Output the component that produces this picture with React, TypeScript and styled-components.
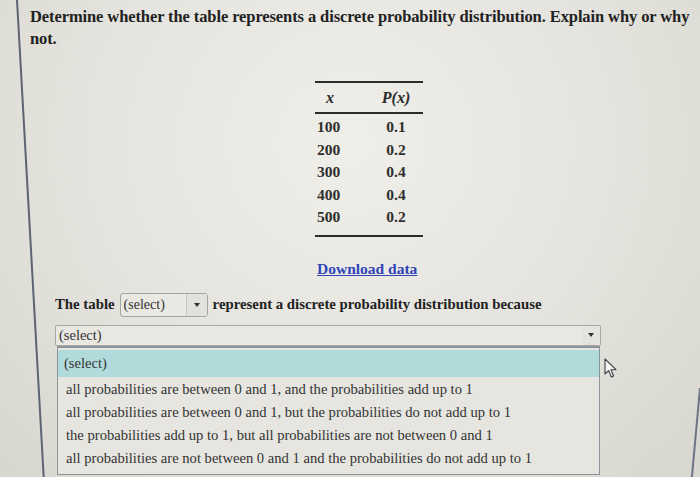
import styled, { createGlobalStyle } from "styled-components";

const GlobalStyle = createGlobalStyle`
  html, body {
    margin: 0;
    padding: 0;
  }
  body {
    font-family: "Liberation Serif", "Times New Roman", serif;
    color: #1f1f1f;
  }
`;

const ROWS = [
  ["100", "0.1"],
  ["200", "0.2"],
  ["300", "0.4"],
  ["400", "0.4"],
  ["500", "0.2"],
];

const OPTIONS = [
  "all probabilities are between 0 and 1, and the probabilities add up to 1",
  "all probabilities are between 0 and 1, but the probabilities do not add up to 1",
  "the probabilities add up to 1, but all probabilities are not between 0 and 1",
  "all probabilities are not between 0 and 1 and the probabilities do not add up to 1",
];

function Cursor() {
  return (
    <CursorMark width="14" height="21" viewBox="0 0 14 21">
      <path
        d="M1 1 L1 16 L4.6 12.6 L7.4 19 L9.6 18 L6.9 11.8 L12 11.6 Z"
        fill="#f4f4f0"
        stroke="#3a3f4a"
        strokeWidth="1.1"
        strokeLinejoin="round"
      />
    </CursorMark>
  );
}

function App() {
  return (
    <Page>
      <GlobalStyle />
      <Title>
        Determine whether the table represents a discrete probability
        distribution. Explain why or why not.
      </Title>

      <TableBlock>
        <DataTable>
          <Head>x</Head>
          <Head $right>P(x)</Head>
          {ROWS.map(([x, p], i) => (
            <Row key={x} $first={i === 0} $last={i === ROWS.length - 1}>
              <Cell>{x}</Cell>
              <Cell $right>{p}</Cell>
            </Row>
          ))}
        </DataTable>
        <DownloadLink href="#">Download data</DownloadLink>
      </TableBlock>

      <Sentence>
        The table
        <InlineSelect>
          <span>(select)</span>
          <ArrowBox>
            <Triangle />
          </ArrowBox>
        </InlineSelect>
        represent a discrete probability distribution because
      </Sentence>

      <Dropdown>
        <WideSelect>
          <span>(select)</span>
          <WideArrow>
            <Triangle />
          </WideArrow>
        </WideSelect>
        <OptionList>
          <Option $active>(select)</Option>
          {OPTIONS.map((o) => (
            <Option key={o}>{o}</Option>
          ))}
        </OptionList>
        <Cursor />
      </Dropdown>
    </Page>
  );
}

const Page = styled.div`
  position: relative;
  width: 700px;
  height: 477px;
  overflow: hidden;
  box-sizing: border-box;
  padding: 6px 0 0 30px;
  background:
    radial-gradient(ellipse at 50% 30%, #efeee9 0%, #e5e4de 50%, #d7d6cf 100%);

  &::before {
    content: "";
    position: absolute;
    left: 16px;
    top: 0;
    width: 1.5px;
    height: 480px;
    background: #5d6371;
    transform-origin: top left;
    transform: rotate(-3.2deg);
  }

  &::after {
    content: "";
    position: absolute;
    left: 699px;
    top: 388px;
    width: 1.5px;
    height: 92px;
    background: #6d7585;
    transform-origin: top left;
    transform: rotate(5.2deg);
  }
`;

const Title = styled.div`
  width: 668px;
  font-weight: bold;
  font-size: 16.5px;
  line-height: 22px;
  color: #222;
  letter-spacing: -0.1px;
`;

const TableBlock = styled.div`
  margin: 31px 0 0 285px;
  width: 108px;
  display: flex;
  flex-direction: column;
`;

const DataTable = styled.div`
  display: grid;
  grid-template-columns: 30px 78px;
  border-top: 2px solid #2b2b2b;
  border-bottom: 2px solid #2b2b2b;
`;

const Head = styled.div<{ $right?: boolean }>`
  font-size: 16px;
  font-style: italic;
  font-weight: bold;
  height: 29px;
  line-height: 29px;
  text-align: center;
  padding-left: ${(p) => (p.$right ? "24px" : "0")};
  border-bottom: 2px solid #2b2b2b;
  color: #2a2a2a;
`;

const Row = styled.div<{ $first?: boolean; $last?: boolean }>`
  display: contents;
  & > div {
    padding-top: ${(p) => (p.$first ? "2px" : "0")};
    padding-bottom: ${(p) => (p.$last ? "6px" : "0")};
  }
`;

const Cell = styled.div<{ $right?: boolean }>`
  font-size: 15.5px;
  font-weight: bold;
  line-height: 22.5px;
  text-align: ${(p) => (p.$right ? "center" : "left")};
  padding-left: ${(p) => (p.$right ? "24px" : "2px")};
  color: #2f2f2f;
`;

const DownloadLink = styled.a`
  margin-top: 22px;
  align-self: flex-start;
  margin-left: 2px;
  font-weight: bold;
  font-size: 15.5px;
  line-height: 20px;
  color: #2f45b8;
  text-decoration: underline;
  white-space: nowrap;
`;

const Sentence = styled.div`
  margin: 14px 0 0 25px;
  display: flex;
  align-items: center;
  gap: 5px;
  font-weight: bold;
  font-size: 14.8px;
  color: #222;
  white-space: nowrap;
`;

const InlineSelect = styled.div`
  display: flex;
  align-items: stretch;
  width: 88px;
  height: 24px;
  box-sizing: border-box;
  border: 1px solid #a5a5a0;
  border-radius: 3px;
  background: #e9e8e3;
  font-weight: normal;
  font-size: 14px;

  & > span {
    flex: 1;
    display: flex;
    align-items: center;
    padding-left: 3px;
    color: #333;
  }
`;

const ArrowBox = styled.div`
  width: 20px;
  display: flex;
  align-items: center;
  justify-content: center;
  border-left: 1px solid #c8c8c2;
  background: #e2e1dc;
`;

const Triangle = styled.div`
  width: 0;
  height: 0;
  border-left: 3px solid transparent;
  border-right: 3px solid transparent;
  border-top: 4px solid #333;
`;

const Dropdown = styled.div`
  position: relative;
  margin: 8px 0 0 25px;
  width: 546px;
`;

const WideSelect = styled.div`
  display: flex;
  height: 21px;
  box-sizing: border-box;
  border: 1px solid #a9a9a4;
  border-radius: 2px;
  background: #e8e7e2;
  font-size: 14.5px;

  & > span {
    flex: 1;
    display: flex;
    align-items: center;
    padding-left: 3px;
    color: #333;
  }
`;

const WideArrow = styled.div`
  width: 18px;
  display: flex;
  align-items: center;
  justify-content: center;
  background: #e4e3de;
`;

const OptionList = styled.div`
  margin-left: 2px;
  width: 543px;
  box-sizing: border-box;
  border: 1px solid #8e9299;
  border-top-width: 2px;
  padding: 2px 0 4px;
  background: #e6e5e0;
`;

const Option = styled.div<{ $active?: boolean }>`
  height: ${(p) => (p.$active ? "27px" : "23px")};
  line-height: ${(p) => (p.$active ? "27px" : "23px")};
  margin-bottom: ${(p) => (p.$active ? "1px" : "0")};
  padding-left: ${(p) => (p.$active ? "6px" : "8px")};
  font-size: 14.6px;
  color: #333;
  white-space: nowrap;
  background: ${(p) => (p.$active ? "#b1dbdb" : "transparent")};
`;

const CursorMark = styled.svg`
  position: absolute;
  left: 549px;
  top: 33px;
`;

export default App;
